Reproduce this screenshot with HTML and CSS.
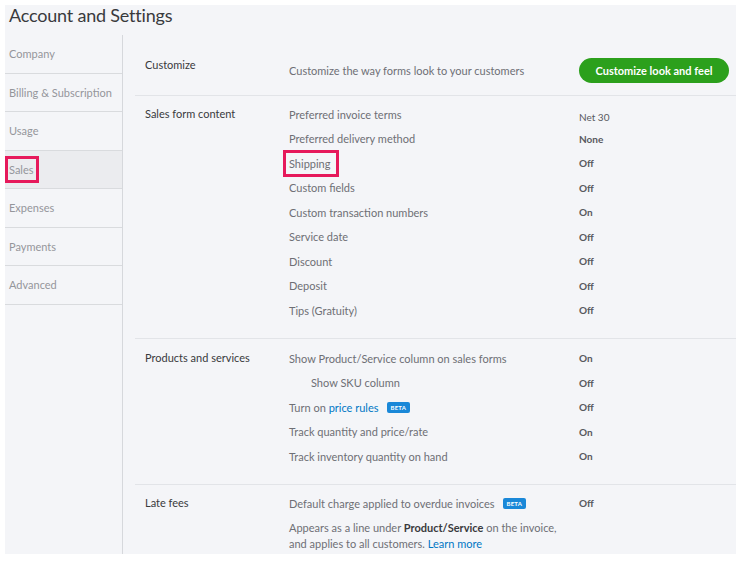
FILE: index.html
```html
<!DOCTYPE html>
<html lang="en">
<head>
<meta charset="utf-8">
<title>Account and Settings</title>
<link rel="stylesheet" href="styles.css">
</head>
<body>
<div class="page">
  <h1 class="title">Account and Settings</h1>
  <div class="layout">
    <nav class="sidebar">
      <div class="nav-item">Company</div>
      <div class="nav-item">Billing &amp; Subscription</div>
      <div class="nav-item">Usage</div>
      <div class="nav-item active"><span class="mark mark-nav">Sales</span></div>
      <div class="nav-item">Expenses</div>
      <div class="nav-item">Payments</div>
      <div class="nav-item">Advanced</div>
    </nav>
    <main class="content">
      <section class="section customize">
        <div class="label">Customize</div>
        <div class="cust-row">
          <div class="set cust-desc">Customize the way forms look to your customers</div>
          <div class="val"><button class="btn-green">Customize look and feel</button></div>
        </div>
      </section>

      <section class="section sales-form">
        <div class="label">Sales form content</div>
        <div class="rows">
          <div class="row"><div class="set">Preferred invoice terms</div><div class="val val-light">Net 30</div></div>
          <div class="row"><div class="set">Preferred delivery method</div><div class="val">None</div></div>
          <div class="row"><div class="set"><span class="mark mark-row">Shipping</span></div><div class="val">Off</div></div>
          <div class="row"><div class="set">Custom fields</div><div class="val">Off</div></div>
          <div class="row"><div class="set">Custom transaction numbers</div><div class="val">On</div></div>
          <div class="row"><div class="set">Service date</div><div class="val">Off</div></div>
          <div class="row"><div class="set">Discount</div><div class="val">Off</div></div>
          <div class="row"><div class="set">Deposit</div><div class="val">Off</div></div>
          <div class="row"><div class="set">Tips (Gratuity)</div><div class="val">Off</div></div>
        </div>
      </section>

      <section class="section products">
        <div class="label">Products and services</div>
        <div class="rows">
          <div class="row"><div class="set">Show Product/Service column on sales forms</div><div class="val">On</div></div>
          <div class="row"><div class="set indent">Show SKU column</div><div class="val">Off</div></div>
          <div class="row"><div class="set">Turn on&nbsp;<a class="link" href="#">price rules</a><span class="beta">BETA</span></div><div class="val">Off</div></div>
          <div class="row"><div class="set">Track quantity and price/rate</div><div class="val">On</div></div>
          <div class="row"><div class="set">Track inventory quantity on hand</div><div class="val">On</div></div>
        </div>
      </section>

      <section class="section late-fees">
        <div class="label">Late fees</div>
        <div class="rows">
          <div class="row"><div class="set">Default charge applied to overdue invoices<span class="beta">BETA</span></div><div class="val">Off</div></div>
          <p class="note"><span>Appears as a line under </span><strong>Product/Service</strong><span> on the invoice,</span><br><span>and applies to all customers. </span><a class="link" href="#">Learn more</a></p>
        </div>
      </section>
    </main>
  </div>
</div>
</body>
</html>
```

FILE: styles.css
```css
* { box-sizing: border-box; }

body {
  margin: 0;
  background: #ffffff;
  font-family: Lato, "Open Sans", sans-serif;
  color: #393a3d;
}

.page {
  margin: 5px 0 0 5px;
  height: 549px;
  background: #f4f5f8;
  display: flex;
  flex-direction: column;
  overflow: hidden;
}

.title {
  margin: 0;
  height: 30px;
  padding: 0 0 0 4px;
  font-size: 18px;
  line-height: 21px;
  letter-spacing: -0.2px;
  font-weight: 400;
  color: #393a3d;
}

.layout {
  flex: 1;
  display: grid;
  grid-template-columns: 118px 1fr;
}

.sidebar {
  border-right: 1px solid #d6d8dc;
}

.nav-item {
  height: 38.5px;
  border-bottom: 1px solid #d9dbde;
  padding-left: 4px;
  display: flex;
  align-items: center;
  font-size: 11px;
  color: #94969b;
}

.nav-item.active {
  background: #ebecef;
  padding-left: 0;
}

.mark {
  display: inline-block;
  border: 3px solid #e6195b;
}

.mark-nav {
  padding: 4px 2px 4px 1px;
  line-height: 13px;
}

.mark-row {
  margin-left: -6px;
  padding: 4px 6px 4px 3px;
  line-height: 13px;
}

.content {
  padding-left: 12px;
}

.section {
  display: grid;
  grid-template-columns: 154px 1fr;
  border-bottom: 1px solid #e2e4e8;
}

.label {
  padding-left: 10px;
  font-size: 11px;
  line-height: 24.5px;
  color: #393a3d;
}

.customize {
  height: 61px;
  padding-top: 23px;
}

.customize .label {
  line-height: 14px;
}

.cust-row {
  display: flex;
  align-items: center;
  height: 25px;
}

.sales-form {
  height: 243px;
  padding-top: 6px;
}

.products {
  height: 146px;
  padding-top: 7px;
}

.late-fees {
  border-bottom: none;
  padding-top: 6px;
}

.row {
  height: 24.5px;
  display: flex;
  align-items: center;
}

.set {
  width: 290px;
  flex: none;
  display: flex;
  align-items: center;
  font-size: 11px;
  color: #6e6f75;
  white-space: nowrap;
}

.set.indent {
  padding-left: 22px;
}

.val {
  font-size: 10px;
  font-weight: 700;
  color: #58595e;
}

.val-light {
  font-weight: 400;
  padding-top: 6px;
}

.link {
  color: #0077c5;
  text-decoration: none;
}

.beta {
  display: inline-block;
  margin-left: 8px;
  padding: 0 4px;
  height: 11px;
  line-height: 11px;
  border-radius: 2px;
  background: #1a88d8;
  color: #ffffff;
  font-size: 6px;
  font-weight: 700;
  letter-spacing: 0.2px;
}

.btn-green {
  width: 150px;
  height: 25px;
  border: none;
  border-radius: 13px;
  background: #2ca01c;
  color: #ffffff;
  font-family: Lato, "Open Sans", sans-serif;
  font-size: 11px;
  font-weight: 700;
  padding: 0;
}

.note {
  margin: 4px 0 0 0;
  font-size: 11px;
  line-height: 16px;
  color: #6e6f75;
  white-space: nowrap;
}

.note strong {
  font-weight: 700;
  color: #393a3d;
}
```
